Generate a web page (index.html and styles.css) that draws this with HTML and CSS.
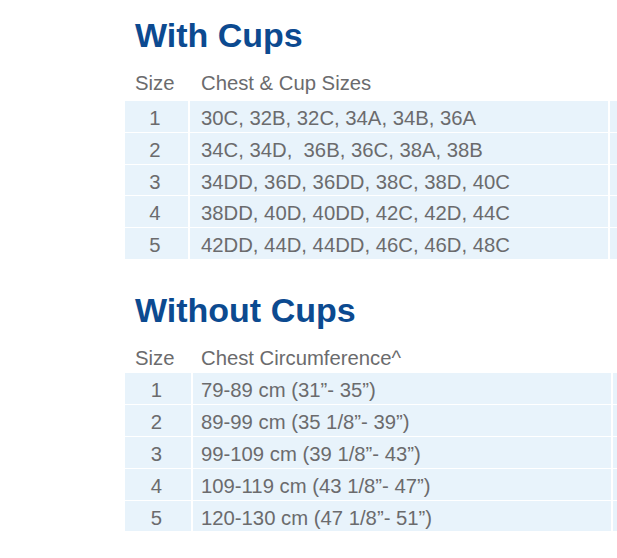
FILE: index.html
```html
<!DOCTYPE html>
<html lang="en">
<head>
<meta charset="utf-8">
<title>Size Chart</title>
<link rel="stylesheet" href="styles.css">
</head>
<body>
<main class="page">
  <section class="chart chart-cups">
    <h2 class="title">With Cups</h2>
    <div class="grid">
      <div class="hd num">Size</div><div class="hd txt">Chest &amp; Cup Sizes</div><div class="hd"></div>
      <div class="cell num">1</div><div class="cell txt">30C, 32B, 32C, 34A, 34B, 36A</div><div class="cell"></div>
      <div class="cell num">2</div><div class="cell txt">34C, 34D,  36B, 36C, 38A, 38B</div><div class="cell"></div>
      <div class="cell num">3</div><div class="cell txt">34DD, 36D, 36DD, 38C, 38D, 40C</div><div class="cell"></div>
      <div class="cell num">4</div><div class="cell txt">38DD, 40D, 40DD, 42C, 42D, 44C</div><div class="cell"></div>
      <div class="cell num">5</div><div class="cell txt">42DD, 44D, 44DD, 46C, 46D, 48C</div><div class="cell"></div>
    </div>
  </section>
  <section class="chart chart-nocups">
    <h2 class="title">Without Cups</h2>
    <div class="grid">
      <div class="hd num">Size</div><div class="hd txt">Chest Circumference^</div><div class="hd"></div>
      <div class="cell num">1</div><div class="cell txt">79-89 cm (31”- 35”)</div><div class="cell"></div>
      <div class="cell num">2</div><div class="cell txt">89-99 cm (35 1/8”- 39”)</div><div class="cell"></div>
      <div class="cell num">3</div><div class="cell txt">99-109 cm (39 1/8”- 43”)</div><div class="cell"></div>
      <div class="cell num">4</div><div class="cell txt">109-119 cm (43 1/8”- 47”)</div><div class="cell"></div>
      <div class="cell num">5</div><div class="cell txt">120-130 cm (47 1/8”- 51”)</div><div class="cell"></div>
    </div>
  </section>
</main>
</body>
</html>
```

FILE: styles.css
```css
html, body {
  margin: 0;
  padding: 0;
  background: #ffffff;
  overflow: hidden;
}

body {
  font-family: "Liberation Sans", Arial, sans-serif;
  color: #6b6b6d;
}

.page {
  padding: 15px 0 0 125px;
  display: flex;
  flex-direction: column;
  width: 520px;
}

.chart-nocups {
  margin-top: 31px;
}

.title {
  margin: 0;
  padding-left: 10px;
  font-size: 34px;
  line-height: 40px;
  font-weight: 700;
  color: #0c4a90;
}

.grid {
  display: grid;
  grid-template-columns: 63px 418px 30px;
  grid-template-rows: 29px repeat(5, 30.8px);
  column-gap: 2px;
  row-gap: 1px;
  margin-top: 16px;
}

.chart-nocups .grid {
  grid-template-columns: 66px 418px 30px;
  grid-template-rows: 26.5px repeat(5, 30.8px);
}

.hd {
  line-height: 24px;
  font-size: 20.3px;
  white-space: pre;
}

.hd.num {
  text-align: left;
  padding-left: 10px;
}

.hd.txt {
  padding-left: 11px;
}

.chart-nocups .hd.txt {
  padding-left: 8px;
}

.cell {
  background: #e8f3fb;
  font-size: 20.3px;
  line-height: 30px;
  padding-top: 2px;
  white-space: pre;
}

.cell.num {
  text-align: center;
  padding-right: 3px;
}

.cell.txt {
  padding-left: 11px;
}

.chart-nocups .cell.txt {
  padding-left: 8px;
}
```
